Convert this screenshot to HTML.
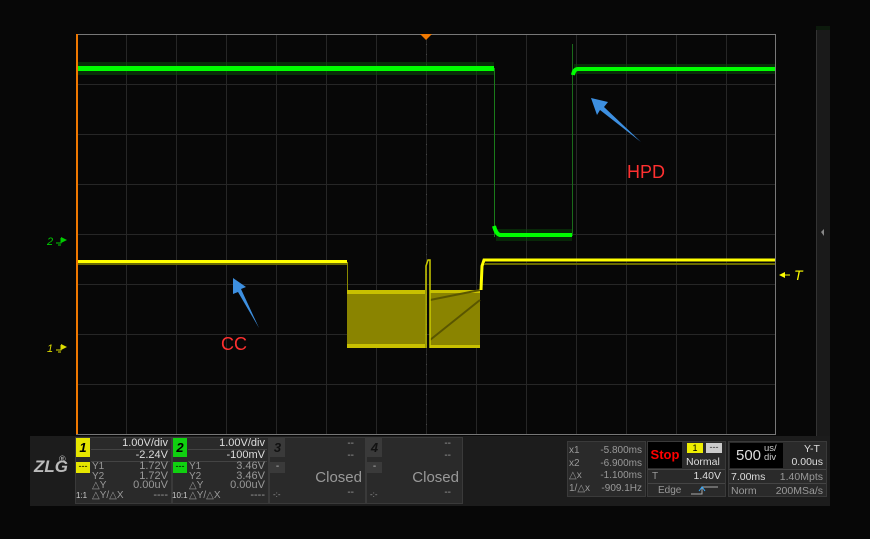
<!DOCTYPE html>
<html><head><meta charset="utf-8">
<style>
*{margin:0;padding:0;box-sizing:border-box}
body{width:870px;height:539px;background:#070707;position:relative;overflow:hidden;font-family:"Liberation Sans",sans-serif;color:#ddd}
.a{position:absolute}
.box{position:absolute;background:#2a2a2a;border:1px solid #3a3a3a}
.t{position:absolute;font-size:10px;line-height:11px;white-space:nowrap}
.r{text-align:right}
.g{color:#999}
</style></head><body>
<svg class="a" style="left:0;top:0" width="870" height="539">
 <rect x="816" y="26" width="14" height="5" fill="#0c1a0c"/>
 <rect x="816" y="30" width="14" height="410" fill="#1a1a1a"/>
 <line x1="816.5" y1="30" x2="816.5" y2="440" stroke="#333"/>
 <path d="M824 229 L821 232 L824 236 Z" fill="#888"/>
 <g stroke="#262626" stroke-width="1">
  <line x1="126.5" y1="34" x2="126.5" y2="434"/><line x1="176.5" y1="34" x2="176.5" y2="434"/>
  <line x1="226.5" y1="34" x2="226.5" y2="434"/><line x1="276.5" y1="34" x2="276.5" y2="434"/>
  <line x1="326.5" y1="34" x2="326.5" y2="434"/><line x1="376.5" y1="34" x2="376.5" y2="434"/>
  <line x1="426.5" y1="34" x2="426.5" y2="434"/><line x1="476.5" y1="34" x2="476.5" y2="434"/>
  <line x1="526.5" y1="34" x2="526.5" y2="434"/><line x1="576.5" y1="34" x2="576.5" y2="434"/>
  <line x1="626.5" y1="34" x2="626.5" y2="434"/><line x1="676.5" y1="34" x2="676.5" y2="434"/>
  <line x1="726.5" y1="34" x2="726.5" y2="434"/>
  <line x1="76" y1="84.5" x2="775" y2="84.5"/><line x1="76" y1="134.5" x2="775" y2="134.5"/>
  <line x1="76" y1="184.5" x2="775" y2="184.5"/><line x1="76" y1="234.5" x2="775" y2="234.5"/>
  <line x1="76" y1="284.5" x2="775" y2="284.5"/><line x1="76" y1="334.5" x2="775" y2="334.5"/>
  <line x1="76" y1="384.5" x2="775" y2="384.5"/>
 </g>
 <g stroke="#444" stroke-width="1">
  <line x1="426.5" y1="34" x2="426.5" y2="434" stroke-dasharray="1 9"/>
 </g>
 <rect x="76.5" y="34.5" width="699" height="400" fill="none" stroke="#777"/>
 <line x1="77" y1="34" x2="77" y2="434" stroke="#f07800" stroke-width="2"/>
 <path d="M420 34 L432 34 L426 40 Z" fill="#f07800"/>
 <g>
  <rect x="78" y="62" width="416" height="13" fill="#0a4a0a" opacity="0.6"/>
  <rect x="78" y="66" width="416" height="5" fill="#00ff00"/>
  <line x1="494.5" y1="68" x2="494.5" y2="237" stroke="#1a7a1a"/>
  <rect x="496" y="229" width="76" height="12" fill="#0a4a0a" opacity="0.5"/>
  <path d="M494 226 Q496 234 500 235 L572 235" stroke="#00ff00" stroke-width="4" fill="none"/>
  <line x1="572.5" y1="44" x2="572.5" y2="236" stroke="#1a6a1a"/>
  <rect x="574" y="64" width="201" height="10" fill="#0a4a0a" opacity="0.6"/>
  <path d="M573 75 Q574 69 578 69 L775 69" stroke="#00ff00" stroke-width="4" fill="none"/>
 </g>
 <rect x="78" y="260" width="269" height="3" fill="#ffff00"/>
 <rect x="78" y="263" width="269" height="2" fill="#6a6a00"/>
 <line x1="347.5" y1="262" x2="347.5" y2="348" stroke="#888800"/>
 <rect x="347" y="290" width="78" height="58" fill="#8a8400"/>
 <rect x="347" y="290" width="78" height="4" fill="#c8c000"/>
 <rect x="347" y="344" width="78" height="4" fill="#c8c000"/>
 <rect x="430" y="290" width="50" height="58" fill="#8a8400"/>
 <rect x="430" y="290" width="50" height="3" fill="#c8c000"/>
 <rect x="430" y="345" width="50" height="3" fill="#c8c000"/>
 <path d="M430 300 L480 290 M430 340 L480 300" stroke="#5a5600" stroke-width="2"/>
 <path d="M426 348 L426 266 L428 260 L430 260 L430 348" stroke="#cccc00" stroke-width="1.5" fill="none"/>
 <path d="M481 290 L482 266 L484 260 L775 260" stroke="#ffff00" stroke-width="3" fill="none"/>
 <rect x="484" y="263" width="291" height="2" fill="#6a6a00"/>
 <text x="47" y="245" fill="#00cc00" font-size="11" font-style="italic" font-family="Liberation Sans">2</text>
 <path d="M56 243 h5 v-5 M58 245 h3" stroke="#00cc00" fill="none"/><path d="M61 237 L67 240 L61 243Z" fill="#00cc00"/>
 <text x="47" y="352" fill="#dddd00" font-size="11" font-style="italic" font-family="Liberation Sans">1</text>
 <path d="M56 350 h5 v-5 M58 352 h3" stroke="#dddd00" fill="none"/><path d="M61 344 L67 347 L61 350Z" fill="#dddd00"/>
 <path d="M779 275 L785 272 L785 278Z" fill="#ffff00"/><line x1="785" y1="275" x2="790" y2="275" stroke="#ffff00"/>
 <text x="794" y="280" fill="#ffff00" font-size="14" font-style="italic" font-family="Liberation Sans">T</text>
 <path d="M233 278 L246 287 L241 289 L259 328 L238 292 L233 294 Z" fill="#3d8fe0"/>
 <path d="M591 98 L608 102 L604 107 L641 142 L600 110 L597 115 Z" fill="#3d8fe0"/>
 <text x="221" y="350" fill="#ff3030" font-size="18" font-family="Liberation Sans">CC</text>
 <text x="627" y="178" fill="#ff3030" font-size="18" font-family="Liberation Sans">HPD</text>
 <rect x="30" y="436" width="800" height="70" fill="#1c1c1c"/>
</svg>

<div class="t" style="left:34px;top:461px;font-size:17px;font-weight:bold;font-style:italic;color:#bbb">ZLG</div>
<div class="t" style="left:59px;top:454px;font-size:9px;color:#bbb">®</div>

<div class="box" style="left:75px;top:437px;width:97px;height:67px"></div>
<div class="a" style="left:76px;top:438px;width:14px;height:19px;background:#e6e600;color:#000;font-weight:bold;font-style:italic;font-size:13px;text-align:center;line-height:19px">1</div>
<div class="a" style="left:76px;top:462px;width:14px;height:11px;background:#e6e600;color:#000;font-size:9px;text-align:center;line-height:9px">---</div>
<div class="t r" style="left:92px;top:438px;width:76px;font-size:11px">1.00V/div</div>
<div class="t r" style="left:92px;top:450px;width:76px;font-size:11px">-2.24V</div>
<div class="a" style="left:91px;top:449px;width:79px;height:1px;background:#444"></div>
<div class="a" style="left:91px;top:461px;width:79px;height:1px;background:#444"></div>
<div class="t g" style="left:92px;top:462px;font-size:10px;line-height:9.5px">Y1<br>Y2<br>&#9651;Y<br>&#9651;Y/&#9651;X</div>
<div class="t g r" style="left:115px;top:462px;width:53px;font-size:11px;line-height:9.5px">1.72V<br>1.72V<br>0.00uV<br>----</div>
<div class="t" style="left:76px;top:490px;font-size:8px;color:#ccc">1:1</div>

<div class="box" style="left:172px;top:437px;width:97px;height:67px"></div>
<div class="a" style="left:173px;top:438px;width:14px;height:19px;background:#10d010;color:#000;font-weight:bold;font-style:italic;font-size:13px;text-align:center;line-height:19px">2</div>
<div class="a" style="left:173px;top:462px;width:14px;height:11px;background:#10d010;color:#000;font-size:9px;text-align:center;line-height:9px">---</div>
<div class="t r" style="left:189px;top:438px;width:76px;font-size:11px">1.00V/div</div>
<div class="t r" style="left:189px;top:450px;width:76px;font-size:11px">-100mV</div>
<div class="a" style="left:188px;top:449px;width:79px;height:1px;background:#444"></div>
<div class="a" style="left:188px;top:461px;width:79px;height:1px;background:#444"></div>
<div class="t g" style="left:189px;top:462px;font-size:10px;line-height:9.5px">Y1<br>Y2<br>&#9651;Y<br>&#9651;Y/&#9651;X</div>
<div class="t g r" style="left:212px;top:462px;width:53px;font-size:11px;line-height:9.5px">3.46V<br>3.46V<br>0.00uV<br>----</div>
<div class="t" style="left:172px;top:490px;font-size:8px;color:#ccc">10:1</div>

<div class="box" style="left:269px;top:437px;width:97px;height:67px"></div>
<div class="a" style="left:270px;top:438px;width:15px;height:19px;background:#3a3a3a;color:#111;font-weight:bold;font-style:italic;font-size:13px;text-align:center;line-height:19px">3</div>
<div class="a" style="left:270px;top:462px;width:15px;height:11px;background:#3a3a3a;color:#bbb;font-size:10px;text-align:center;line-height:9px">-</div>
<div class="t g r" style="left:300px;top:438px;width:54px">--</div>
<div class="t g r" style="left:300px;top:450px;width:54px">--</div>
<div class="t g r" style="left:290px;top:470px;width:72px;font-size:15px;line-height:15px">Closed</div>
<div class="t g" style="left:273px;top:489px;font-size:8px">-:-</div>
<div class="t g r" style="left:300px;top:487px;width:54px">--</div>

<div class="box" style="left:366px;top:437px;width:97px;height:67px"></div>
<div class="a" style="left:367px;top:438px;width:15px;height:19px;background:#3a3a3a;color:#111;font-weight:bold;font-style:italic;font-size:13px;text-align:center;line-height:19px">4</div>
<div class="a" style="left:367px;top:462px;width:15px;height:11px;background:#3a3a3a;color:#bbb;font-size:10px;text-align:center;line-height:9px">-</div>
<div class="t g r" style="left:397px;top:438px;width:54px">--</div>
<div class="t g r" style="left:397px;top:450px;width:54px">--</div>
<div class="t g r" style="left:387px;top:470px;width:72px;font-size:15px;line-height:15px">Closed</div>
<div class="t g" style="left:370px;top:489px;font-size:8px">-:-</div>
<div class="t g r" style="left:397px;top:487px;width:54px">--</div>

<div class="box" style="left:567px;top:441px;width:79px;height:56px"></div>
<div class="t g" style="left:569px;top:445px;line-height:12.5px">x1<br>x2<br>&#9651;x<br>1/&#9651;x</div>
<div class="t g r" style="left:580px;top:445px;width:62px;line-height:12.5px">-5.800ms<br>-6.900ms<br>-1.100ms<br>-909.1Hz</div>

<div class="box" style="left:647px;top:441px;width:79px;height:56px"></div>
<div class="a" style="left:648px;top:442px;width:34px;height:26px;background:#000;color:#f00;font-weight:bold;font-size:13px;line-height:26px;text-align:center">Stop</div>
<div class="a" style="left:687px;top:443px;width:16px;height:10px;background:#eeee00;color:#000;font-size:9px;line-height:10px;text-align:center">1</div>
<div class="a" style="left:706px;top:443px;width:16px;height:10px;background:#ccc;color:#333;font-size:9px;line-height:8px;text-align:center">---</div>
<div class="t" style="left:686px;top:457px;font-size:10.5px">Normal</div>
<div class="a" style="left:648px;top:469px;width:77px;height:1px;background:#444"></div>
<div class="t g" style="left:652px;top:471px;font-size:10px">T</div>
<div class="t r" style="left:680px;top:471px;width:41px;font-size:10.5px">1.40V</div>
<div class="a" style="left:648px;top:483px;width:77px;height:1px;background:#444"></div>
<div class="t g" style="left:658px;top:485px;font-size:10px">Edge</div>
<svg class="a" style="left:690px;top:485px" width="32" height="10"><path d="M1 9 H12 V2 H28" stroke="#aaa" fill="none"/><path d="M9 6 L12 2 L15 6" stroke="#3af" fill="none"/></svg>

<div class="box" style="left:728px;top:441px;width:99px;height:56px"></div>
<div class="a" style="left:730px;top:443px;width:53px;height:25px;background:#000"></div>
<div class="t" style="left:736px;top:448px;font-size:15px;line-height:15px">500</div>
<div class="t" style="left:764px;top:444px;font-size:9.5px;line-height:9px;color:#ccc">us/<br>div</div>
<div class="t" style="left:804px;top:444px;font-size:10.5px">Y-T</div>
<div class="t r" style="left:780px;top:457px;width:43px;font-size:10.5px">0.00us</div>
<div class="a" style="left:729px;top:469px;width:97px;height:1px;background:#444"></div>
<div class="t" style="left:731px;top:472px;font-size:10.5px">7.00ms</div>
<div class="t g r" style="left:770px;top:472px;width:53px;font-size:10.5px">1.40Mpts</div>
<div class="a" style="left:729px;top:483px;width:97px;height:1px;background:#444"></div>
<div class="t g" style="left:731px;top:486px;font-size:10.5px">Norm</div>
<div class="t g r" style="left:770px;top:486px;width:53px;font-size:10.5px">200MSa/s</div>
</body></html>
